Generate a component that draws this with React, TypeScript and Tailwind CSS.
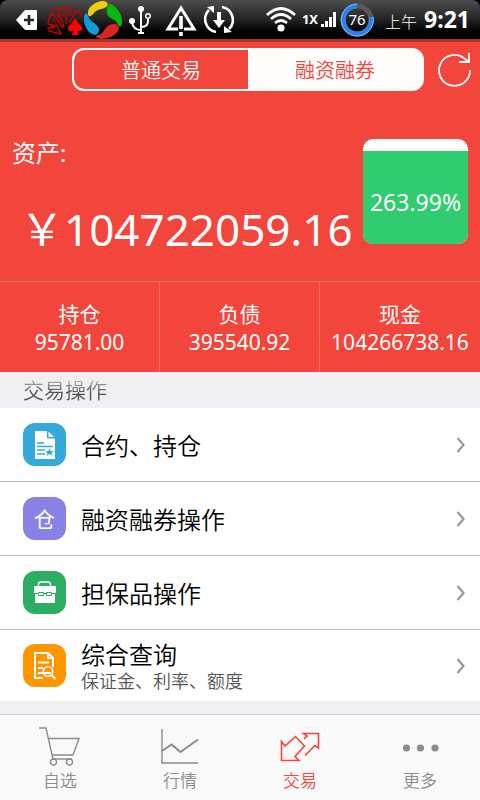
import { useState } from 'react';
import type { ReactNode } from 'react';

const stats = [
  { label: '持仓', value: '95781.00' },
  { label: '负债', value: '395540.92' },
  { label: '现金', value: '104266738.16' },
];

function StatusIcons() {
  return (
    <div className="flex items-center" aria-hidden="true">
      <svg viewBox="0 0 22 20" className="mr-[9px] h-5 w-[22px]">
        <path d="M0 10 8 1Q9 0 10 0H20Q21 0 21 1V19Q21 20 20 20H10Q9 20 8 19Z" fill="#fff" />
        <path d="M13 5V15M8 10H18" stroke="#222" strokeWidth="2.6" />
      </svg>
      <svg viewBox="47 4 37 32" className="h-8 w-[37px]" fill="none" stroke="#c80000" strokeWidth="1.4">
        <path d="m49 31-1-3 9-3 4 9Z" />
        <path d="M57 26 48 24 50 15 54 15 63 28" />
        <path d="M51 15 54 9 58 9 64 27" />
        <path d="M58 10 63 7 67 8 66 24" />
        <path d="M67 9 72 7 76 11 69 23" />
        <path d="M76 12 80 12 82 17" />
        <path d="m53 20 3 2M57 14l3 4M64 12v4M71 12l-2 4M51 28l4-1" />
        <path
          d="M75 18Q73 22 69 26Q66 31 71 31Q74 31 74 29L72 35H79L77 29Q77 31 80 31Q85 30 81 26Q77 22 75 18Z"
          fill="#f00"
          stroke="none"
        />
      </svg>
      <svg viewBox="85 0 39 38" className="mr-[6px] h-[38px] w-[39px]">
        <path d="M89 13C88 6 97 0 104 0C109 0 110 4 107 6C103 9 99 7 95 12C92 16 89 16 89 13Z" fill="#edcf0a" />
        <path d="M111 3C117 4 124 14 123 22C122 27 120 26 118 22C116 17 109 18 108 12C107 7 108 4 111 3Z" fill="#08b90d" />
        <path d="M86 13C88 11 89 14 90 17C92 21 99 23 100 28C100 33 97 35 93 33C86 29 83 18 86 13Z" fill="#0c9edc" />
        <path d="M97 36C97 33 101 35 104 31C107 26 110 23 115 23C120 23 121 27 119 30C115 37 102 40 97 36Z" fill="#da2525" />
      </svg>
      <svg viewBox="130 3 23 30" className="mr-[13px] h-[30px] w-[23px]" fill="none" stroke="#fff" strokeWidth="2">
        <circle cx="142" cy="7" r="3" fill="#fff" stroke="none" />
        <circle cx="133" cy="19" r="3" fill="#fff" stroke="none" />
        <circle cx="149" cy="14" r="2.3" strokeWidth="1.4" />
        <path d="M142 6V31M133 20Q134 28 142 28M149 17Q150 25 142 25M139 31H145" />
      </svg>
      <svg viewBox="165 3 32 32" className="mr-[7px] h-8 w-8">
        <path d="M181 7 194 28H168Z" fill="none" stroke="#fff" strokeWidth="3" />
        <path d="M181 15V30" stroke="#1d1d1d" strokeWidth="6" />
        <path d="M181 15V28M181 31V35" stroke="#fff" strokeWidth="3.6" />
      </svg>
      <svg viewBox="203 4 30 31" className="h-[31px] w-[30px]">
        <path
          d="M215 32A13 13 0 0 1 208 10M221 7A13 13 0 0 1 228 29"
          fill="none"
          stroke="#fff"
          strokeWidth="2.6"
        />
        <path d="m206 7 7-1v7ZM231 32l-8 1v-7ZM216 12H220V20H224L218 28 212 20H216Z" fill="#fff" />
      </svg>
    </div>
  );
}

function StatusBar() {
  return (
    <header className="h-[42px] border-b-[3px] border-[#a5342d] bg-black">
      <div className="flex h-[39px] items-center justify-between rounded-t-lg bg-linear-to-b from-[#4d4d4d] via-[#242424] to-black pl-4 pr-[10px] text-white">
        <StatusIcons />
        <div className="flex items-center">
          <svg viewBox="265 5 32 27" className="mr-[5px] h-[27px] w-8" fill="none" stroke="#fff" strokeWidth="2.7" aria-hidden="true">
            <path d="M267 14Q281 1 295 14M271 18Q281 9 291 18M275 22Q281 17 287 22" />
            <circle cx="281" cy="27" r="3.6" fill="#fff" stroke="none" />
          </svg>
          <span className="text-[13px] font-bold leading-none">1X</span>
          <svg viewBox="320 8 16 17" className="mx-[3px] h-[17px] w-4" fill="#fff" aria-hidden="true">
            <path d="M320 21h3v3h-3zM324 18h3v6h-3zM328 14h3v10h-3zM332 9h3v15h-3z" />
          </svg>
          <div className="relative mr-[11px] flex size-[34px] items-center justify-center">
            <svg viewBox="0 0 34 34" className="absolute inset-0" fill="none" strokeWidth="5" aria-hidden="true">
              <circle cx="17" cy="17" r="14" stroke="#5a5a5a" />
              <path d="M17 3A14 14 0 1 0 31 14" stroke="#2f7fe6" />
              <path d="M17 1A16 16 0 1 0 33 14" stroke="#82b8f8" strokeWidth="1" />
            </svg>
            <span className="relative text-[15px] leading-none">76</span>
          </div>
          <span className="mr-[7px] mt-1 text-base font-light leading-none">上午</span>
          <span className="text-[23px] font-bold leading-none">9:21</span>
        </div>
      </div>
    </header>
  );
}

function Account() {
  const [tab, setTab] = useState('margin');

  return (
    <section className="bg-[#f2453b] text-white">
      <div className="flex items-center pl-[72px] pr-2 pt-[6px]">
        <div className="flex h-[43px] flex-1 overflow-hidden rounded-xl border-2 border-[#fffcfc] bg-[#fffcfc] text-xl font-[350]">
          <button
            onClick={() => setTab('normal')}
            className={`flex-1 rounded-l-[10px] pt-[2px] ${tab === 'normal' ? 'text-[#f2453b]' : 'bg-[#f2453b] text-white'}`}
          >
            普通交易
          </button>
          <button
            onClick={() => setTab('margin')}
            className={`flex-1 rounded-r-[10px] pt-[2px] ${tab === 'margin' ? 'text-[#f2453b]' : 'bg-[#f2453b] text-white'}`}
          >
            融资融券
          </button>
        </div>
        <button aria-label="刷新" className="ml-[14px]">
          <svg viewBox="0 0 34 34" className="size-[34px]" fill="none" stroke="#fff" strokeWidth="1.8">
            <path d="M32 17A15.500 15.500 0 1 1 27 6L31 9M31 0V9H21" />
          </svg>
        </button>
      </div>

      <div className="flex h-[190px] justify-between pr-3 pt-[48px]">
        <div className="flex-1">
          <h1 className="pl-3 text-2xl leading-7">资产:</h1>
          <p className="flex items-center whitespace-nowrap pl-5 pt-[34px] text-[44px] leading-[56px]">
            <span className="w-11">{'\uFFE5'}</span>
            <span>104722059.16</span>
          </p>
        </div>
        <div className="flex size-[105px] flex-col overflow-hidden rounded-[10px] bg-white">
          <div className="mt-3 flex flex-1 items-center justify-center bg-[#2fcd70] pt-[10px] text-[23px]">
            263.99%
          </div>
        </div>
      </div>

      <dl className="grid h-[91px] grid-cols-3 divide-x divide-[#f66f67] border-t border-[#f66f67] text-center">
        {stats.map((stat) => (
          <div key={stat.label} className="pt-[18px]">
            <dt className="text-[21px] leading-7">{stat.label}</dt>
            <dd className="text-[21px] leading-7">{stat.value}</dd>
          </div>
        ))}
      </dl>
    </section>
  );
}

interface MenuRowProps {
  color: string;
  title: string;
  note?: string;
  icon: ReactNode;
}

function MenuRow({ color, title, note, icon }: MenuRowProps) {
  return (
    <li>
      <button className={`flex w-full items-center pl-[23px] pr-[14px] text-left ${note ? 'h-[71px]' : 'h-[73px]'}`}>
        <span className={`flex size-[43px] items-center justify-center rounded-xl ${color}`}>{icon}</span>
        <span className="ml-[15px] flex-1 pt-[2px] font-[350]">
          <span className="block text-2xl leading-7 text-black">{title}</span>
          {note && <span className="block text-lg leading-6 text-[#555]">{note}</span>}
        </span>
        <svg viewBox="0 0 10 16" className="h-4 w-[10px]" fill="none" stroke="#999" strokeWidth="2.2" aria-hidden="true">
          <path d="m1.500 1 6 7-6 7" />
        </svg>
      </button>
    </li>
  );
}

function Menu() {
  return (
    <ul className="divide-y divide-[#bcbcbc] bg-white">
      <MenuRow
        color="bg-[#34aadc]"
        title="合约、持仓"
        icon={
          <svg viewBox="0 0 43 43" className="size-[43px]" aria-hidden="true">
            <path d="M12 8H24V15.500H32V36H12Z" fill="#fff" />
            <path d="M25.500 8.500V14H31Z" fill="#fff" />
            <path d="M14 20H21M14 23.500H30M14 27H22M14 31H22" stroke="#34aadc" strokeWidth="1.4" />
            <path d="m26.500 25 1 3h3l-2 2 1 3-3-2-3 2 1-3-2-2h3Z" fill="#34aadc" />
          </svg>
        }
      />
      <MenuRow
        color="bg-[#8982e6]"
        title="融资融券操作"
        icon={<span className="pt-[2px] text-[21px] leading-none text-white">仓</span>}
      />
      <MenuRow
        color="bg-[#2bae62]"
        title="担保品操作"
        icon={
          <svg viewBox="0 0 43 43" className="size-[43px]" aria-hidden="true">
            <path d="M15.500 16V13.500Q15.500 11 18 11H25Q27.500 11 27.500 13.500V16" fill="none" stroke="#fff" strokeWidth="1.3" />
            <path d="M11 15H33V22H11ZM12 23H32V32H12Z" fill="#fff" />
            <path d="M15.500 21.500h5v3h-5zM23.500 21.500h5v3h-5z" fill="#fff" stroke="#2bae62" />
          </svg>
        }
      />
      <MenuRow
        color="bg-[#ff9600]"
        title="综合查询"
        note="保证金、利率、额度"
        icon={
          <svg viewBox="0 0 43 43" className="size-[43px]" fill="none" stroke="#fff" strokeWidth="2" aria-hidden="true">
            <path d="M20 34H12V9H25L30 14V23M25 9V14H30M15 18.500H26M15 24H20M15 29H20" />
            <circle cx="25" cy="27.500" r="4.700" strokeWidth="1.600" />
            <path d="m28.500 31 4 4M21 29H28" />
          </svg>
        }
      />
    </ul>
  );
}

function TabBar() {
  const [active, setActive] = useState('交易');

  const items = [
    {
      label: '自选',
      icon: (
        <svg viewBox="38 725 44 44" className="h-11 w-11" fill="none" stroke="currentColor" strokeWidth="1.4">
          <path d="M39 728H46L53 759H72M49 738.500H79L73 755H52" />
          <circle cx="53.500" cy="762" r="3" />
          <circle cx="69.500" cy="762" r="3" />
        </svg>
      ),
    },
    {
      label: '行情',
      icon: (
        <svg viewBox="158 725 44 44" className="h-11 w-11" fill="none" stroke="currentColor">
          <path d="M162 729V763H198" strokeWidth="1.4" />
          <path d="M162 751 171.500 744.500 180.500 752 198 739.500" strokeWidth="2" />
        </svg>
      ),
    },
    {
      label: '交易',
      icon: (
        <svg viewBox="278 725 44 44" className="h-11 w-11" fill="none" stroke="currentColor" strokeWidth="1.6">
          <path d="M281.500 741.500V760.500H299L295 756.500 304.500 746 295.500 736.500 285 746Z" />
          <path d="M305 755.500 315 745.500 318.500 748V733.500H303.500L307 736 304 739" />
        </svg>
      ),
    },
    {
      label: '更多',
      icon: (
        <svg viewBox="398 725 44 44" className="h-11 w-11" fill="currentColor">
          <circle cx="406.500" cy="748" r="3.600" />
          <circle cx="420.500" cy="748" r="3.600" />
          <circle cx="435" cy="748" r="3.600" />
        </svg>
      ),
    },
  ];

  return (
    <nav className="grid h-[86px] grid-cols-4 border-t border-[#cfcfcf] bg-[#f9f9f9]">
      {items.map((item) => (
        <button
          key={item.label}
          onClick={() => setActive(item.label)}
          className={`flex flex-col items-center pt-[10px] ${active === item.label ? 'text-[#f2453b]' : 'text-[#8c8c8c]'}`}
        >
          {item.icon}
          <span className="text-[17px] font-[350] leading-6">{item.label}</span>
        </button>
      ))}
    </nav>
  );
}

export default function App() {
  return (
    <div className="flex min-h-screen flex-col bg-[#efeff4] font-['Noto_Sans','Noto_Sans_CJK_SC',sans-serif]">
      <StatusBar />
      <main className="flex-1">
        <Account />
        <h2 className="pl-[23px] text-[21px] font-[350] leading-9">
          <span className="bg-linear-to-b from-[#aaa] from-20% to-[#505050] to-60% bg-clip-text text-transparent">
            交易操作
          </span>
        </h2>
        <Menu />
      </main>
      <TabBar />
    </div>
  );
}
